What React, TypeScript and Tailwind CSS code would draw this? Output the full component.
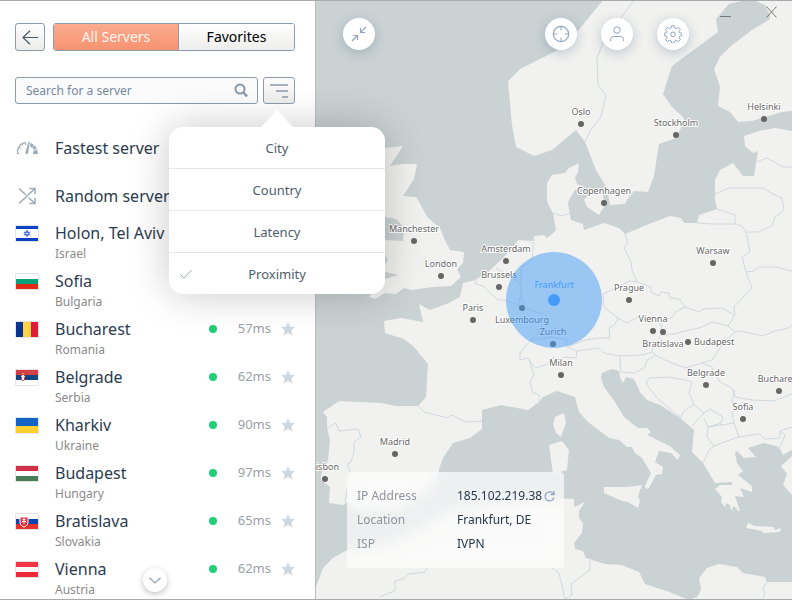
import React from "react";

type Server = {
	city: string;
	country: string;
	flag: React.JSX.Element;
	ping?: string;
};

type MapCity = {
	name: string;
	x: number;
	y: number;
	labelX?: number;
	labelY?: number;
	anchor?: "start" | "middle";
};

const servers: Server[] = [
	{
		city: "Holon, Tel Aviv",
		country: "Israel",
		flag: (
			<>
				<path fill="#fff" d="M0 0h22v15H0z" />
				<path fill="#0b43c4" d="M0 0h22v3H0zM0 12h22v3H0z" />
				<path fill="#a9bdf0" stroke="#5179dc" strokeWidth="1.300" d="M11 4.700l2.400 4H8.600zM11 10.300l2.400-4H8.600z" />
			</>
		),
	},
	{
		city: "Sofia",
		country: "Bulgaria",
		flag: (
			<>
				<path fill="#fff" d="M0 0h22v5H0z" />
				<path fill="#08a17a" d="M0 5h22v5H0z" />
				<path fill="#df2b16" d="M0 10h22v5H0z" />
			</>
		),
	},
	{
		city: "Bucharest",
		country: "Romania",
		flag: (
			<>
				<path fill="#07348c" d="M0 0h7v15H0z" />
				<path fill="#fdd148" d="M7 0h8v15H7z" />
				<path fill="#df1b35" d="M15 0h7v15h-7z" />
			</>
		),
		ping: "57ms",
	},
	{
		city: "Belgrade",
		country: "Serbia",
		flag: (
			<>
				<path fill="#d43f46" d="M0 0h22v5H0z" />
				<path fill="#12477f" d="M0 5h22v5H0z" />
				<path fill="#fff" d="M0 10h22v5H0z" />
				<path fill="#c8414b" d="M5 4h4v6l-2 1-2-1z" />
				<path fill="#f1e9e6" d="M6 5h2v1h1v1H8v3H6V7H5V6h1z" />
				<path fill="#dfab45" d="M6 3h2v1H6z" />
			</>
		),
		ping: "62ms",
	},
	{
		city: "Kharkiv",
		country: "Ukraine",
		flag: (
			<>
				<path fill="#1464c5" d="M0 0h22v8H0z" />
				<path fill="#fed12e" d="M0 8h22v7H0z" />
			</>
		),
		ping: "90ms",
	},
	{
		city: "Budapest",
		country: "Hungary",
		flag: (
			<>
				<path fill="#d13046" d="M0 0h22v5H0z" />
				<path fill="#fff" d="M0 5h22v5H0z" />
				<path fill="#4a7d56" d="M0 10h22v5H0z" />
			</>
		),
		ping: "97ms",
	},
	{
		city: "Bratislava",
		country: "Slovakia",
		flag: (
			<>
				<path fill="#fff" d="M0 0h22v5H0z" />
				<path fill="#0e42ae" d="M0 5h22v5H0z" />
				<path fill="#e5312c" d="M0 10h22v5H0z" />
				<path fill="#ed2a3a" stroke="#fff" d="M4 3h8v5c0 3-2 4-4 5-2-1-4-2-4-5z" />
				<path fill="none" stroke="#fff" d="M8 4v6M6.500 5.500h3M6 7.500h4" />
			</>
		),
		ping: "65ms",
	},
	{
		city: "Vienna",
		country: "Austria",
		flag: (
			<>
				<path fill="#f23446" d="M0 0h22v5H0z" />
				<path fill="#f8f8f8" d="M0 5h22v5H0z" />
				<path fill="#ed2939" d="M0 10h22v5H0z" />
			</>
		),
		ping: "62ms",
	},
];

const sortOptions = ["City", "Country", "Latency", "Proximity"];

const cities: MapCity[] = [
	{ name: "Oslo", x: 581, y: 124 },
	{ name: "Stockholm", x: 676, y: 135 },
	{ name: "Helsinki", x: 764, y: 119 },
	{ name: "Copenhagen", x: 604, y: 203 },
	{ name: "Manchester", x: 414, y: 241 },
	{ name: "London", x: 441, y: 276 },
	{ name: "Amsterdam", x: 506, y: 261 },
	{ name: "Brussels", x: 499, y: 287 },
	{ name: "Paris", x: 473, y: 320 },
	{ name: "Luxembourg", x: 522, y: 308, labelY: 323 },
	{ name: "Zurich", x: 553, y: 344 },
	{ name: "Milan", x: 561, y: 375 },
	{ name: "Prague", x: 629, y: 300 },
	{ name: "Warsaw", x: 713, y: 263 },
	{ name: "Vienna", x: 653, y: 331 },
	{ name: "Bratislava", x: 663, y: 332, labelY: 347 },
	{ name: "Budapest", x: 688, y: 342, labelX: 694, labelY: 345, anchor: "start" },
	{ name: "Belgrade", x: 706, y: 385 },
	{ name: "Sofia", x: 743, y: 419 },
	{ name: "Bucharest", x: 779, y: 391 },
	{ name: "Madrid", x: 395, y: 454 },
	{ name: "Lisbon", x: 325, y: 479 },
];

const land = [
	// Norway, Sweden
	"508,81 520,69 556,51 577,32 603,0 745,0 729,4 716,19 718,32 672,66 663,94 672,107 684,118 681,128 676,138 659,144 654,176 648,192 634,191 627,200 625,204 610,205 607,188 596,170 585,142 576,130 552,150 534,156 516,147 512,125",
	// Finland
	"754,0 765,5 770,15 770,19 752,30 731,46 720,57 714,69 720,87 718,106 730,112 738,122 752,121 782,112 792,111 792,0",
	// Continent
	"792,131 775,128 759,131 744,136 745,146 753,153 758,151 754,176 743,176 733,163 720,170 715,180 715,200 717,209 699,215 697,223 684,223 681,218 670,216 649,224 625,234 619,228 604,223 584,230 583,224 571,220 568,204 569,200 575,190 584,187 577,184 575,178 578,172 579,163 569,168 565,173 552,175 547,183 547,200 548,204 553,213 555,225 556,230 552,234 547,238 544,235 534,236 532,241 518,240 513,247 501,260 488,272 475,280 463,283 460,297 449,303 430,310 419,304 423,322 401,318 384,321 385,333 404,339 414,347 428,364 426,397 418,406 396,406 381,403 339,401 323,412 327,417 327,428 330,440 328,460 321,475 321,480 330,487 329,503 343,505 347,502 362,512 400,510 425,495 438,480 439,469 443,458 453,443 470,438 482,429 482,410 501,405 528,410 539,402 543,397 554,392 557,391 575,397 579,412 588,422 609,438 619,440 627,447 632,447 635,453 642,458 651,473 645,486 646,489 649,488 656,475 662,474 663,467 655,462 659,451 671,453 678,460 680,455 670,446 647,435 651,432 647,428 638,428 624,417 615,402 604,387 601,378 602,373 612,369 619,371 620,377 623,383 626,377 634,379 640,392 647,400 660,405 680,418 694,430 692,452 703,463 709,473 715,483 732,482 732,485 720,485 715,489 722,497 721,502 725,507 726,503 730,505 731,511 734,506 738,511 740,511 735,496 744,497 740,488 752,492 752,486 738,475 743,471 737,463 735,453 737,451 744,458 756,457 748,448 764,443 779,447 783,455 792,450",
	// Great Britain
	"375,148 385,148 403,146 390,166 403,164 417,164 414,179 403,196 416,197 418,200 428,218 440,228 444,238 450,250 464,252 463,263 457,269 461,277 451,286 433,287 411,290 404,288 396,294 385,293 375,299 369,297 385,279 399,275 385,272 385,264 388,260 385,255 375,250 385,240 403,241 404,227 396,219 385,217 375,217",
	// Turkey
	"792,456 781,466 787,474 783,485 792,495",
	// Crete, Sicily, Corsica, Sardinia, Zealand
	"748,523 746,528 762,531 763,533 780,532 781,528 775,530 774,527 755,526",
	"604,487 604,493 622,501 628,502 638,508 640,501 638,496 642,485 627,487",
	"564,413 555,417 553,424 556,433 561,437 566,423",
	"549,445 562,441 569,450 567,470 553,474",
	"584,200 587,207 599,215 604,207 603,194 590,193",
	// North Africa
	"316,587 323,568 333,558 347,550 383,545 415,530 450,510 500,500 552,498 574,499 574,507 585,502 579,511 579,518 583,523 582,533 574,543 575,549 583,551 586,558 605,564 622,565 639,572 645,584 667,591 689,600 697,597 701,590 699,578 707,568 719,564 737,567 743,573 765,577 767,582 792,582 792,600 316,600",
];

const borders = [
	"634,0 621,18 603,43 597,58 598,85 606,95 601,117 590,131 585,142",
	"756,162 767,158 783,167 792,167",
	"715,194 729,188 763,188 771,193 782,198 784,210 775,217 772,226 758,232 746,232",
	"717,209 735,215 735,224",
	"697,223 712,224 735,224 742,226 746,232 750,252 742,257 746,272 752,288 734,307 735,315 728,326 735,332",
	"746,272 754,271 759,267 775,267 792,271",
	"625,234 628,243 624,248 631,262 632,270 637,282 651,287 651,292 659,296 661,292 669,293 670,298 679,299 685,307 699,312 704,309 722,308 734,315",
	"637,282 629,281 616,288 603,294 604,307 618,318 627,323 640,316 660,323 672,317 677,311 685,307",
	"618,318 615,324 609,328 610,338 599,338 585,340 567,347",
	"661,323 662,335 674,334 685,331 699,328 713,322 728,326",
	"735,332 724,342 712,360 702,363 685,368 665,360 655,355 652,350 661,335",
	"735,332 740,331 763,336 775,331 789,328 792,325",
	"577,351 599,348 604,353 620,356 642,355 652,352",
	"620,356 620,363 621,372 635,373 645,367 647,360 655,356",
	"692,400 689,393 692,382 685,380 669,377 649,378 646,384 659,400 681,418",
	"702,363 712,367 720,382 732,388 735,397 752,400 774,401 792,394",
	"735,390 732,400 734,410 732,413 734,423",
	"692,400 694,404 683,412 681,418",
	"694,404 704,413 692,426",
	"704,413 710,409 723,417 721,423 708,427 704,418",
	"708,427 734,423 739,437 727,441 714,446 707,437 708,427",
	"714,446 709,450 703,463",
	"739,437 759,434 765,439 780,438 780,431 792,427",
	"780,431 785,435 780,447",
	"475,280 476,284 483,286 498,300 506,300 518,305 524,308 546,315 539,332 531,340 520,353 520,360 528,358 535,368 546,365 554,357",
	"529,360 534,375 530,382 533,393 539,395 539,401",
	"534,237 532,260 521,268 521,297 518,305",
	"496,268 504,273 516,280 521,285",
	"518,298 523,299 524,308",
	"531,340 552,337 567,340 567,347 577,351 576,358 565,357 554,362",
	"553,213 562,216 570,213",
	"418,406 424,412 448,418 451,415 466,422 482,421",
	"327,428 336,423 339,431 358,429 361,437 354,442 354,452 351,462 347,464 350,472 345,502",
	"427,568 425,572 409,574 403,579 395,581 395,591 379,597",
	"552,568 559,573 565,599 572,595 571,584 590,570 590,560",
	"767,582 763,588 765,593 762,600",
];

function EuropeMap(): React.JSX.Element {
	return (
		<svg
			className="absolute inset-0 w-full h-full"
			viewBox="316 1 476 598"
			preserveAspectRatio="xMinYMin slice"
			role="img"
			aria-label="Map of Europe">
			{land.map((points, i) => (
				<polygon key={i} points={points} fill="#f1f1ef" />
			))}
			{borders.map((points, i) => (
				<polyline key={i} points={points} fill="none" stroke="#d0d9df" strokeLinejoin="round" />
			))}
			{cities.map((city) => (
				<g key={city.name} fill="#666">
					<circle cx={city.x} cy={city.y} r="3" />
					<text
						x={city.labelX ?? city.x}
						y={city.labelY ?? city.y - 9}
						textAnchor={city.anchor ?? "middle"}
						stroke="#fff"
						strokeWidth="2"
						strokeLinejoin="round"
						paintOrder="stroke"
						className="text-[9px]">
						{city.name}
					</text>
				</g>
			))}
			<circle cx="554" cy="300" r="48" fill="#449cf8" fillOpacity="0.5" />
			<circle cx="554" cy="300" r="6" fill="#449cf8" />
			<text x="554" y="288" textAnchor="middle" fill="#449cf8" className="text-[9px]">
				Frankfurt
			</text>
		</svg>
	);
}

function RoundButton({ label, children }: { label: string; children: React.ReactNode }): React.JSX.Element {
	return (
		<button
			type="button"
			aria-label={label}
			className="flex items-center justify-center size-8 rounded-full bg-white shadow-[0_3px_12px_rgba(70,100,140,0.3)]">
			<svg className="size-[18px]" viewBox="0 0 18 18" fill="none" stroke="#91a5c0">
				{children}
			</svg>
		</button>
	);
}

function SortMenu(): React.JSX.Element {
	return (
		<div
			role="menu"
			className="absolute z-20 left-[169px] top-[126px] w-[216px] rounded-[14px] bg-white shadow-[0_0_40px_rgba(0,0,0,0.22)]">
			<svg className="absolute left-[90px] -top-[17px] w-9 h-[18px]" viewBox="0 0 36 18" fill="#fff">
				<path d="M0 18C4 16 14 5 16 1.500Q18-.5 20 1.500C23 5 32 16 36 18z" />
			</svg>
			{sortOptions.map((option) => (
				<button
					key={option}
					type="button"
					role="menuitem"
					className="relative block w-full h-[42px] pt-0.5 border-b border-[#e6e7e8] last:border-b-0 last:h-[41px] text-center text-[13px] text-[#4e5d6d]">
					{option === "Proximity" && (
						<svg
							className="absolute left-[11px] top-4 w-3 h-2.5"
							viewBox="0 0 12 10"
							fill="none"
							stroke="#9aa8b7">
							<path d="M.5 5.500l3.500 3.500 7.500-8" />
						</svg>
					)}
					{option}
				</button>
			))}
		</div>
	);
}

function ServerRow({ server }: { server: Server }): React.JSX.Element {
	return (
		<li className="h-12 pl-[15px] pr-5 flex items-start">
			<svg className="mt-[5px] w-6 h-[17px] border border-[#e3e4e6] rounded-[1px]" viewBox="0 0 22 15">
				{server.flag}
			</svg>
			<div className="ml-4 flex-1">
				<div className="text-base leading-[26px] text-[#2b3b50]">{server.city}</div>
				<div className="text-xs leading-4 text-[#8a8a8a]">{server.country}</div>
			</div>
			{server.ping && (
				<div className="flex items-center h-[26px]">
					<span className="size-2 rounded-full bg-[#21d075]" />
					<span className="w-[54px] text-right text-[13px] text-[#99a0aa]">{server.ping}</span>
					<button type="button" aria-label={`Add ${server.city} to favorites`} className="ml-2.5">
						<svg className="size-3.5" viewBox="0 0 14 14" fill="#d0d6df">
							<path d="M7 0l2 4.700 5 .4-3.800 3.300L11.400 13.500 7 10.800 2.600 13.500 3.800 8.400 0 5.100l5-.4z" />
						</svg>
					</button>
				</div>
			)}
		</li>
	);
}

function Sidebar(): React.JSX.Element {
	return (
		<aside className="relative flex flex-col w-[316px] shrink-0 bg-white border-r border-[#b9bcbf]">
			<div className="flex gap-2 pt-[22px] pl-[15px] pr-5">
				<button
					type="button"
					aria-label="Back"
					className="flex items-center justify-center w-[30px] h-7 rounded-[3px] border border-[#8c9cae] bg-linear-to-b from-[#fdfdfd] to-[#ededec]">
					<svg className="w-4 h-[15px]" viewBox="0 0 16 15" fill="none" stroke="#4a5a6e" strokeWidth="1.200">
						<path d="M8 .7L1 7.500l7 6.800M1 7.500h15" />
					</svg>
				</button>
				<div className="flex flex-1 h-7 rounded-[3px] border border-[#8c9cae] overflow-hidden text-sm">
					<button
						type="button"
						className="w-[125px] border-r border-[#8c9cae] bg-linear-to-b from-[#fbab90] to-[#f69370] text-[#fff4ef]">
						All Servers
					</button>
					<button type="button" className="flex-1 bg-linear-to-b from-white to-[#ededec] text-black">
						Favorites
					</button>
				</div>
			</div>
			<div className="flex gap-[5px] pt-[26px] pl-[15px] pr-5">
				<label className="flex flex-1 min-w-0 items-center h-[27px] pl-2.5 pr-2 rounded-[3px] border border-[#8c9cae] bg-[#fbfbfb]">
					<input
						type="text"
						aria-label="Search for a server"
						placeholder="Search for a server"
						className="flex-1 min-w-0 text-xs text-[#2b3b50] placeholder:text-[#7389a0] outline-none"
					/>
					<svg className="w-4 h-[15px]" viewBox="0 0 16 15" fill="none" stroke="#8798aa" strokeWidth="2">
						<circle cx="7" cy="6" r="4.500" />
						<path d="M10 9l4 4.500" strokeWidth="2.400" />
					</svg>
				</label>
				<button
					type="button"
					aria-label="Sort servers"
					className="flex items-center justify-center w-8 h-[27px] rounded-[3px] border border-[#8c9cae] bg-linear-to-b from-[#fdfdfd] to-[#ededec]">
					<svg className="w-[18px] h-3.5" viewBox="0 0 18 14" stroke="#a6b1be" strokeWidth="2">
						<path d="M0 1h18M6 7h12M12 13h6" />
					</svg>
				</button>
			</div>
			<ul className="pt-5 flex-1 min-h-0 overflow-hidden">
				<li className="h-12 pl-4 flex items-center text-base text-[#2b3b50]">
					<svg className="w-[23px] h-4 mr-4" viewBox="0 0 23 16" fill="#9daab8">
						<path d="M1.500 14C.8 8 4 3.300 9.500 2.500" fill="none" stroke="#9daab8" strokeWidth="1.200" />
						<path d="M3 7.500l2 1M6 4l1 1.500M9.500 2.500V5M1.500 13.500h2" stroke="#9daab8" />
						<path d="M9.300 13l3.200-11.500 1.300.3L12 13.500Q10.500 15 9.300 13z" />
						<path d="M14.500 2.800l3 1.700-1 3.500-2.500-1.500zM18 4.800l3 3.700-3.500 1.500-.5-2zM21.300 9.500l.7 4.500h-5l.3-3z" />
					</svg>
					Fastest server
				</li>
				<li className="h-12 pl-4 flex items-center text-base text-[#2b3b50]">
					<svg className="w-[23px] h-[18px] mr-4" viewBox="0 0 23 18" fill="none" stroke="#9daab8" strokeWidth="1.500">
						<path d="M3 1.500l7 6.500M12.500 10.500l6.500 6M3 16.500L19 1.500" />
						<path d="M13.500 1.500H19V7M13.500 16.500H19V11" />
					</svg>
					Random server
				</li>
				{servers.map((server) => (
					<ServerRow key={server.city} server={server} />
				))}
			</ul>
			<button
				type="button"
				aria-label="Scroll down"
				className="absolute bottom-[7px] left-[143px] flex items-center justify-center size-6 rounded-full bg-white shadow-[0_2px_6px_rgba(0,0,0,0.25)]">
				<svg className="w-3 h-[7px]" viewBox="0 0 12 7" fill="none" stroke="#91a1b2" strokeWidth="1.200">
					<path d="M.5.8L6 6 11.500.8" />
				</svg>
			</button>
		</aside>
	);
}

function InfoPanel(): React.JSX.Element {
	return (
		<dl className="absolute left-[31px] bottom-[31px] w-[217px] p-2.5 py-3 grid grid-cols-[100px_1fr] rounded bg-white/65 backdrop-blur-[8px] text-xs leading-6 text-[#26364b]">
			<dt className="text-[#8d949d]">IP Address</dt>
			<dd className="flex items-center gap-0.5">
				185.102.219.38
				<button type="button" aria-label="Refresh">
					<svg className="size-[11px]" viewBox="0 0 11 11" fill="none" stroke="#93a6c0" strokeWidth="1.300">
						<path d="M9.300 2.800A4.500 4.500 0 1 0 10 6.500M10 0v3.700H6.300" />
					</svg>
				</button>
			</dd>
			<dt className="text-[#8d949d]">Location</dt>
			<dd>Frankfurt, DE</dd>
			<dt className="text-[#8d949d]">ISP</dt>
			<dd>IVPN</dd>
		</dl>
	);
}

export default function App(): React.JSX.Element {
	return (
		<div className="relative flex h-screen overflow-hidden border-y border-[#a8abad] font-['Noto_Sans','Open_Sans',sans-serif]">
			<Sidebar />
			<main className="relative flex-1 min-w-0 bg-[#cad2d3]">
				<EuropeMap />
				<header className="relative flex items-start pl-[27px] pr-[15px]">
					<div className="pt-[17px]">
						<RoundButton label="Collapse map">
							<path d="M16 2l-5.500 5.500M10.500 3v4.500H15M2 16l5.500-5.500M3 10.500h4.500V15" strokeWidth="1.200" />
						</RoundButton>
					</div>
					<div className="flex gap-6 pt-[17px] ml-auto">
						<RoundButton label="Center on location">
							<circle cx="9" cy="9" r="7.700" strokeWidth="1.200" />
							<path d="M9 1.500v4M9 12.500v4M1.500 9h4M12.500 9h4" />
						</RoundButton>
						<RoundButton label="Account">
							<circle cx="9" cy="5" r="3.200" />
							<path d="M2.500 16v-1.500a3 3 0 0 1 3-3h7a3 3 0 0 1 3 3V16" />
						</RoundButton>
						<RoundButton label="Settings">
							<path d="M7.500.8h3l.4 2.200 1.600.7 1.900-1.300 2 2-1.300 1.900.7 1.600 2 .4v2.400l-2 .4-.7 1.600 1.300 1.900-2 2-1.900-1.300-1.600.7-.4 2h-3l-.4-2-1.600-.7-1.900 1.300-2-2 1.300-1.900-.7-1.600-2-.4V8.300l2-.4.7-1.600-1.300-1.900 2-2 1.900 1.300 1.600-.7z" strokeLinejoin="round" />
							<circle cx="9" cy="9.300" r="2.300" />
						</RoundButton>
					</div>
					<div className="flex gap-[35px] pt-[5px] ml-[31px]">
						<button type="button" aria-label="Minimize">
							<svg className="w-[11px] h-3" viewBox="0 0 11 12" stroke="#777">
								<path d="M0 10.500h11" />
							</svg>
						</button>
						<button type="button" aria-label="Close">
							<svg className="w-[11px] h-3" viewBox="0 0 11 12" stroke="#777">
								<path d="M.5.5l10 11M10.500.5l-10 11" />
							</svg>
						</button>
					</div>
				</header>
				<InfoPanel />
			</main>
			<SortMenu />
		</div>
	);
}
